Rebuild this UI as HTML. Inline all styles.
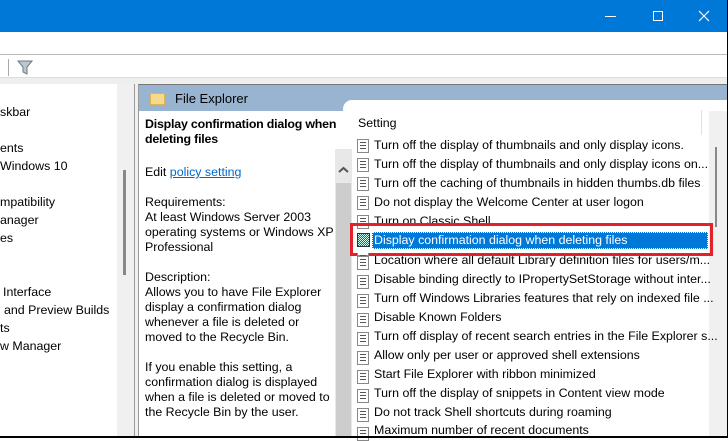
<!DOCTYPE html>
<html><head><style>
*{margin:0;padding:0;box-sizing:border-box}
body{width:728px;height:438px;overflow:hidden;background:#fff;font-family:"Liberation Sans",sans-serif;font-size:12.4px;color:#000;position:relative}
.a{position:absolute;white-space:nowrap}
.ic{position:absolute;width:12px;height:14px;border:1px solid #888;background:#fff}
.ic:before{content:"";position:absolute;left:2px;top:2px;width:6px;height:8px;background:repeating-linear-gradient(#555 0 1px,transparent 1px 3px)}
.row{position:absolute;left:374px;height:17px;line-height:17px;white-space:nowrap}
</style></head><body>
<div class="a" style="left:0;top:0;width:728px;height:32px;background:#0078d7"></div>
<div class="a" style="left:605px;top:16px;width:11px;height:1px;background:#fff"></div>
<div class="a" style="left:653px;top:11px;width:10px;height:10px;border:1px solid #fff"></div>
<svg class="a" style="left:698px;top:10px" width="12" height="12"><path d="M1 1L11 11M11 1L1 11" stroke="#fff" stroke-width="1.2"/></svg>
<div class="a" style="left:0;top:54px;width:728px;height:1px;background:#bbb"></div>
<div class="a" style="left:8px;top:59px;width:1px;height:17px;background:#aaa"></div>
<svg class="a" style="left:17px;top:60px" width="16" height="15"><path d="M1 1H15L10 7V14L6 12V7Z" fill="#bcc6cc" stroke="#6b7a84"/></svg>
<div class="a" style="left:0;top:77px;width:728px;height:7px;background:#eee;border-top:1px solid #ddd"></div>
<!-- left tree -->
<div class="a" style="left:117px;top:84px;width:17px;height:354px;background:#f0f0f0"></div>
<div class="a" style="left:123px;top:170px;width:3px;height:105px;background:#888"></div>
<div class="a" style="left:134px;top:84px;width:5px;height:354px;background:#f0f0f0;border-left:1px solid #999;border-right:1px solid #999"></div>
<div class="a" style="left:0;top:105px">skbar</div>
<div class="a" style="left:0;top:141px">ents</div>
<div class="a" style="left:0;top:159px">Windows 10</div>
<div class="a" style="left:0;top:195px">mpatibility</div>
<div class="a" style="left:0;top:213px">anager</div>
<div class="a" style="left:0;top:231px">es</div>
<div class="a" style="left:3px;top:285px">Interface</div>
<div class="a" style="left:4px;top:303px">and Preview Builds</div>
<div class="a" style="left:0;top:321px">ts</div>
<div class="a" style="left:0;top:339px">w Manager</div>
<!-- header -->
<div class="a" style="left:139px;top:84px;width:588px;height:27px;background:#99b4d1;border-top:1px solid #777"></div>
<div class="a" style="left:343px;top:100px;width:385px;height:20px;background:#fff;border-radius:9px 0 0 0"></div>
<div class="a" style="left:150px;top:93px;width:15px;height:12px;background:#f7d98a;border:1px solid #d8b45a"></div>
<div class="a" style="left:175px;top:91px;font-size:13px">File Explorer</div>
<!-- desc -->
<div class="a" style="left:335px;top:149px;width:17px;height:289px;background:#e8e8e8"></div>
<svg class="a" style="left:338px;top:166px" width="11" height="8"><path d="M1 6L5.5 2L10 6" stroke="#555" stroke-width="2" fill="none"/></svg>
<div class="a" style="left:336px;top:183px;width:15px;height:255px;background:#cdcdcd"></div>
<div class="a" style="left:145px;top:117px;font-weight:bold;line-height:15px;white-space:normal;width:200px;letter-spacing:-0.2px">Display confirmation dialog when deleting files</div>
<div class="a" style="left:145px;top:165px">Edit <span style="color:#0066cc;text-decoration:underline">policy setting </span></div>
<div class="a" style="left:145px;top:195px;line-height:15px">Requirements:<br>At least Windows Server 2003<br>operating systems or Windows XP<br>Professional<br><br>Description:<br>Allows you to have File Explorer<br>display a confirmation dialog<br>whenever a file is deleted or<br>moved to the Recycle Bin.<br><br>If you enable this setting, a<br>confirmation dialog is displayed<br>when a file is deleted or moved to<br>the Recycle Bin by the user.</div>
<!-- list -->
<div class="a" style="left:709px;top:111px;width:19px;height:327px;background:#f0f0f0"></div>
<div class="a" style="left:715px;top:147px;width:2px;height:80px;background:#888"></div>
<div class="a" style="left:701px;top:110px;width:1px;height:25px;background:#e0e0e0"></div>
<div class="a" style="left:358px;top:116px">Setting</div>
<div class="ic" style="left:357px;top:139px"></div><div class="row" style="top:137px">Turn off the display of thumbnails and only display icons.</div>
<div class="ic" style="left:357px;top:158px"></div><div class="row" style="top:156px">Turn off the display of thumbnails and only display icons on...</div>
<div class="ic" style="left:357px;top:177px"></div><div class="row" style="top:175px">Turn off the caching of thumbnails in hidden thumbs.db files</div>
<div class="ic" style="left:357px;top:196px"></div><div class="row" style="top:194px">Do not display the Welcome Center at user logon</div>
<div class="ic" style="left:357px;top:215px"></div><div class="row" style="top:213px">Turn on Classic Shell</div>
<div class="a" style="left:357px;top:233px;width:13px;height:14px;background:repeating-conic-gradient(#1a5fb4 0 25%,#cfe 0 50%) 0 0/2px 2px;border:1px solid #234"></div>
<div class="row" style="left:372px;top:232px;width:336px;background:#0078d7;color:#fff;padding-left:2px;outline:1px dotted #fff;outline-offset:-1px">Display confirmation dialog when deleting files</div>
<div class="a" style="left:350px;top:223px;width:363px;height:33px;border:3px solid #e2212a"></div>
<div class="ic" style="left:357px;top:253px;height:3px;border-top:0"></div>
<div class="ic" style="left:357px;top:256px"></div><div class="row" style="top:252px;clip-path:inset(4px 0 0 0)">Location where all default Library definition files for users/m...</div>
<div class="ic" style="left:357px;top:275px"></div><div class="row" style="top:271px">Disable binding directly to IPropertySetStorage without inter...</div>
<div class="ic" style="left:357px;top:294px"></div><div class="row" style="top:290px">Turn off Windows Libraries features that rely on indexed file ...</div>
<div class="ic" style="left:357px;top:313px"></div><div class="row" style="top:309px">Disable Known Folders</div>
<div class="ic" style="left:357px;top:332px"></div><div class="row" style="top:328px">Turn off display of recent search entries in the File Explorer s...</div>
<div class="ic" style="left:357px;top:351px"></div><div class="row" style="top:347px">Allow only per user or approved shell extensions</div>
<div class="ic" style="left:357px;top:370px"></div><div class="row" style="top:366px">Start File Explorer with ribbon minimized</div>
<div class="ic" style="left:357px;top:389px"></div><div class="row" style="top:385px">Turn off the display of snippets in Content view mode</div>
<div class="ic" style="left:357px;top:408px"></div><div class="row" style="top:404px">Do not track Shell shortcuts during roaming</div>
<div class="ic" style="left:357px;top:427px"></div><div class="row" style="top:422px">Maximum number of recent documents</div>
<div class="a" style="left:0;top:436px;width:728px;height:2px;background:#000"></div>
<div class="a" style="left:727px;top:0;width:1px;height:438px;background:#000"></div>
</body></html>
